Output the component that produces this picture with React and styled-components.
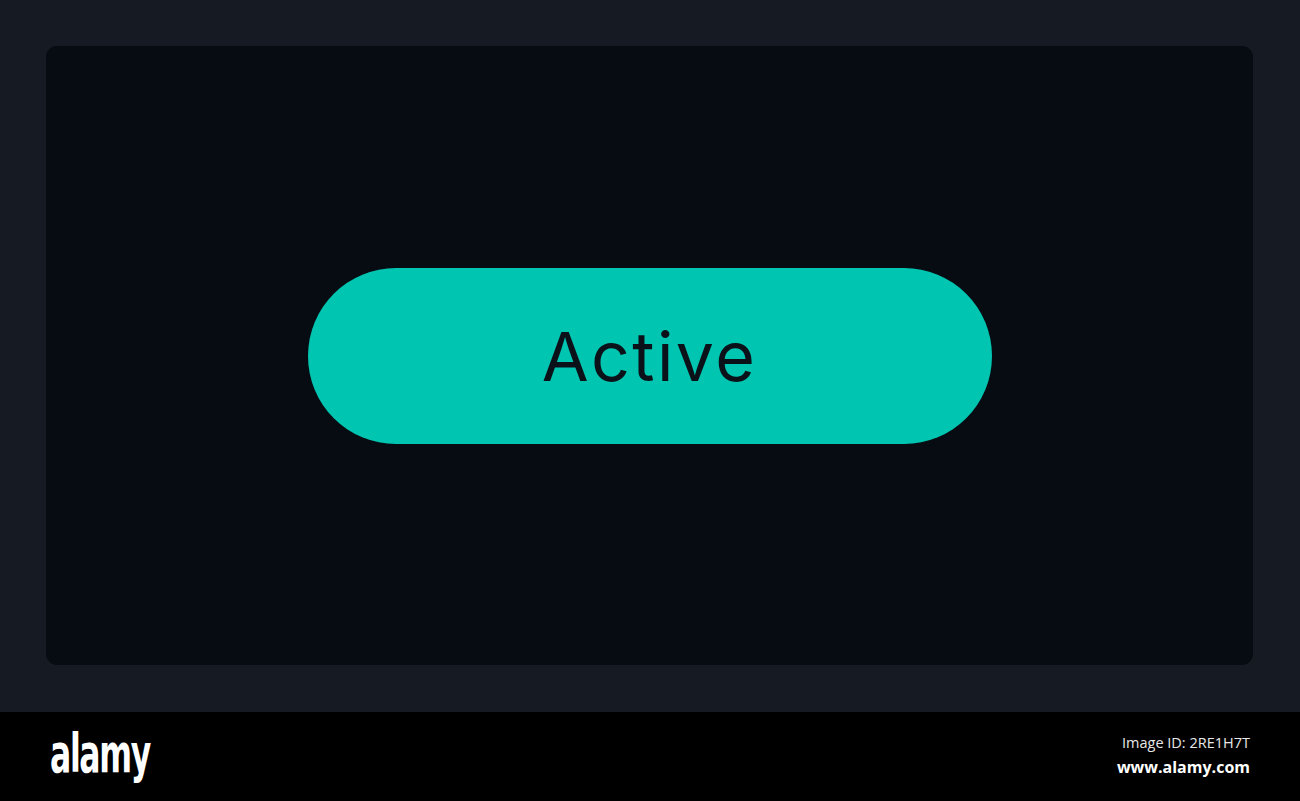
import styled, { createGlobalStyle } from 'styled-components';

const GlobalStyle = createGlobalStyle`
  html, body {
    margin: 0;
    padding: 0;
    background: #161b23;
  }
  * { box-sizing: border-box; }
`;

const Page = styled.div`
  width: 1300px;
  height: 801px;
  display: flex;
  flex-direction: column;
  background: #161b23;
  font-family: "Inter", "Liberation Sans", sans-serif;
`;

const Stage = styled.div`
  height: 712px;
  padding: 46px 47px 47px 46px;
  display: flex;
`;

const Panel = styled.div`
  flex: 1;
  background: #070c13;
  border-radius: 11px;
  display: flex;
  align-items: center;
  justify-content: center;
`;

const PillButton = styled.button`
  width: 684px;
  height: 176px;
  border: none;
  border-radius: 88px;
  background: ${props => (props.active ? '#00c5b1' : '#2a313b')};
  color: #0a1119;
  font-family: "Inter", "Liberation Sans", sans-serif;
  font-size: 68px;
  font-weight: 400;
  letter-spacing: 2.4px;
  display: flex;
  align-items: center;
  justify-content: center;
  padding-top: 1px;
  cursor: pointer;
`;

const Footer = styled.div`
  height: 89px;
  background: #000;
  display: flex;
  align-items: center;
  justify-content: space-between;
  padding: 0 50px 0 50px;
`;

const Brand = styled.div`
  color: #fff;
  font-family: "DejaVu Sans Condensed", "Liberation Sans", sans-serif;
  font-weight: 700;
  font-size: 53px;
  letter-spacing: -2px;
  transform: scaleX(0.66);
  transform-origin: left center;
  margin-top: -6px;
`;

const Meta = styled.div`
  display: flex;
  flex-direction: column;
  align-items: flex-end;
  gap: 4px;
  color: #fff;
  font-family: "Open Sans", "Liberation Sans", sans-serif;
  margin-top: -2px;
`;

const MetaId = styled.span`
  font-size: 14.5px;
  color: #e8e8e8;
`;

const MetaUrl = styled.span`
  font-size: 16px;
  font-weight: 700;
`;

export default function App() {
  return (
    <>
      <GlobalStyle />
      <Page>
        <Stage>
          <Panel>
            <PillButton active>Active</PillButton>
          </Panel>
        </Stage>
        <Footer>
          <Brand>alamy</Brand>
          <Meta>
            <MetaId>Image ID: 2RE1H7T</MetaId>
            <MetaUrl>www.alamy.com</MetaUrl>
          </Meta>
        </Footer>
      </Page>
    </>
  );
}
